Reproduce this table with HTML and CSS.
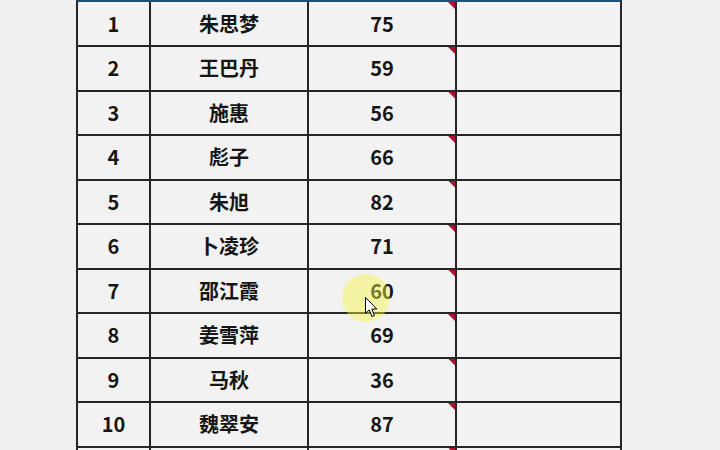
FILE: index.html
```html
<!DOCTYPE html>
<html lang="zh-CN">
<head>
<meta charset="utf-8">
<title>成绩表</title>
<link rel="stylesheet" href="styles.css">
</head>
<body>
<div class="sheet">
  <div class="grid">
    <div class="cell">1</div><div class="cell">朱思梦</div><div class="cell note">75</div><div class="cell"></div>
    <div class="cell">2</div><div class="cell">王巴丹</div><div class="cell note">59</div><div class="cell"></div>
    <div class="cell">3</div><div class="cell">施惠</div><div class="cell note">56</div><div class="cell"></div>
    <div class="cell">4</div><div class="cell">彪子</div><div class="cell note">66</div><div class="cell"></div>
    <div class="cell">5</div><div class="cell">朱旭</div><div class="cell note">82</div><div class="cell"></div>
    <div class="cell">6</div><div class="cell">卜凌珍</div><div class="cell note">71</div><div class="cell"></div>
    <div class="cell">7</div><div class="cell">邵江霞</div><div class="cell note">60</div><div class="cell"></div>
    <div class="cell">8</div><div class="cell">姜雪萍</div><div class="cell note">69</div><div class="cell"></div>
    <div class="cell">9</div><div class="cell">马秋</div><div class="cell note">36</div><div class="cell"></div>
    <div class="cell">10</div><div class="cell">魏翠安</div><div class="cell note">87</div><div class="cell"></div>
    <div class="cell"></div><div class="cell"></div><div class="cell note"></div><div class="cell"></div>
  </div>
  <div class="highlight"></div>
  <svg class="cursor" width="13" height="21" viewBox="0 0 13 21">
    <path d="M0.5 0.5 L0.5 16.5 L4.3 12.9 L6.9 19.5 L9.4 18.5 L6.8 12 L11.8 12 Z" fill="#ffffff" stroke="#000000" stroke-width="1" stroke-linejoin="miter"/>
  </svg>
</div>
</body>
</html>
```
FILE: styles.css
```css
html, body {
  margin: 0;
  padding: 0;
  background: #f0f0f0;
  overflow: hidden;
}
.sheet {
  position: relative;
  width: 720px;
  height: 450px;
  overflow: hidden;
}
.grid {
  margin-left: 76px;
  width: 546px;
  display: grid;
  grid-template-columns: 71px 156px 146px 163px;
  grid-template-rows: 43px;
  grid-auto-rows: 42.5px;
  gap: 2px;
  background: #262626;
  border-top: 2px solid #1f4e79;
  border-left: 2px solid #262626;
  border-right: 2px solid #262626;
  box-sizing: border-box;
  font-family: "Noto Sans CJK SC", "Noto Sans", sans-serif;
  font-weight: 700;
  font-size: 20px;
  color: #161616;
}
.cell {
  background: #f2f2f2;
  display: flex;
  align-items: center;
  justify-content: center;
  position: relative;
  line-height: 1;
}
.note::after {
  content: "";
  position: absolute;
  top: 0;
  right: 0;
  width: 7px;
  height: 7px;
  background: #b0102c;
  clip-path: polygon(0 0, 100% 0, 100% 100%);
}
.highlight {
  position: absolute;
  left: 342px;
  top: 274px;
  width: 48px;
  height: 48px;
  border-radius: 50%;
  background: radial-gradient(circle, rgba(245, 245, 60, 0.45) 0%, rgba(245, 245, 60, 0.42) 72%, rgba(245, 245, 60, 0) 100%);
  pointer-events: none;
}
.cursor {
  position: absolute;
  left: 365px;
  top: 297px;
}
```
